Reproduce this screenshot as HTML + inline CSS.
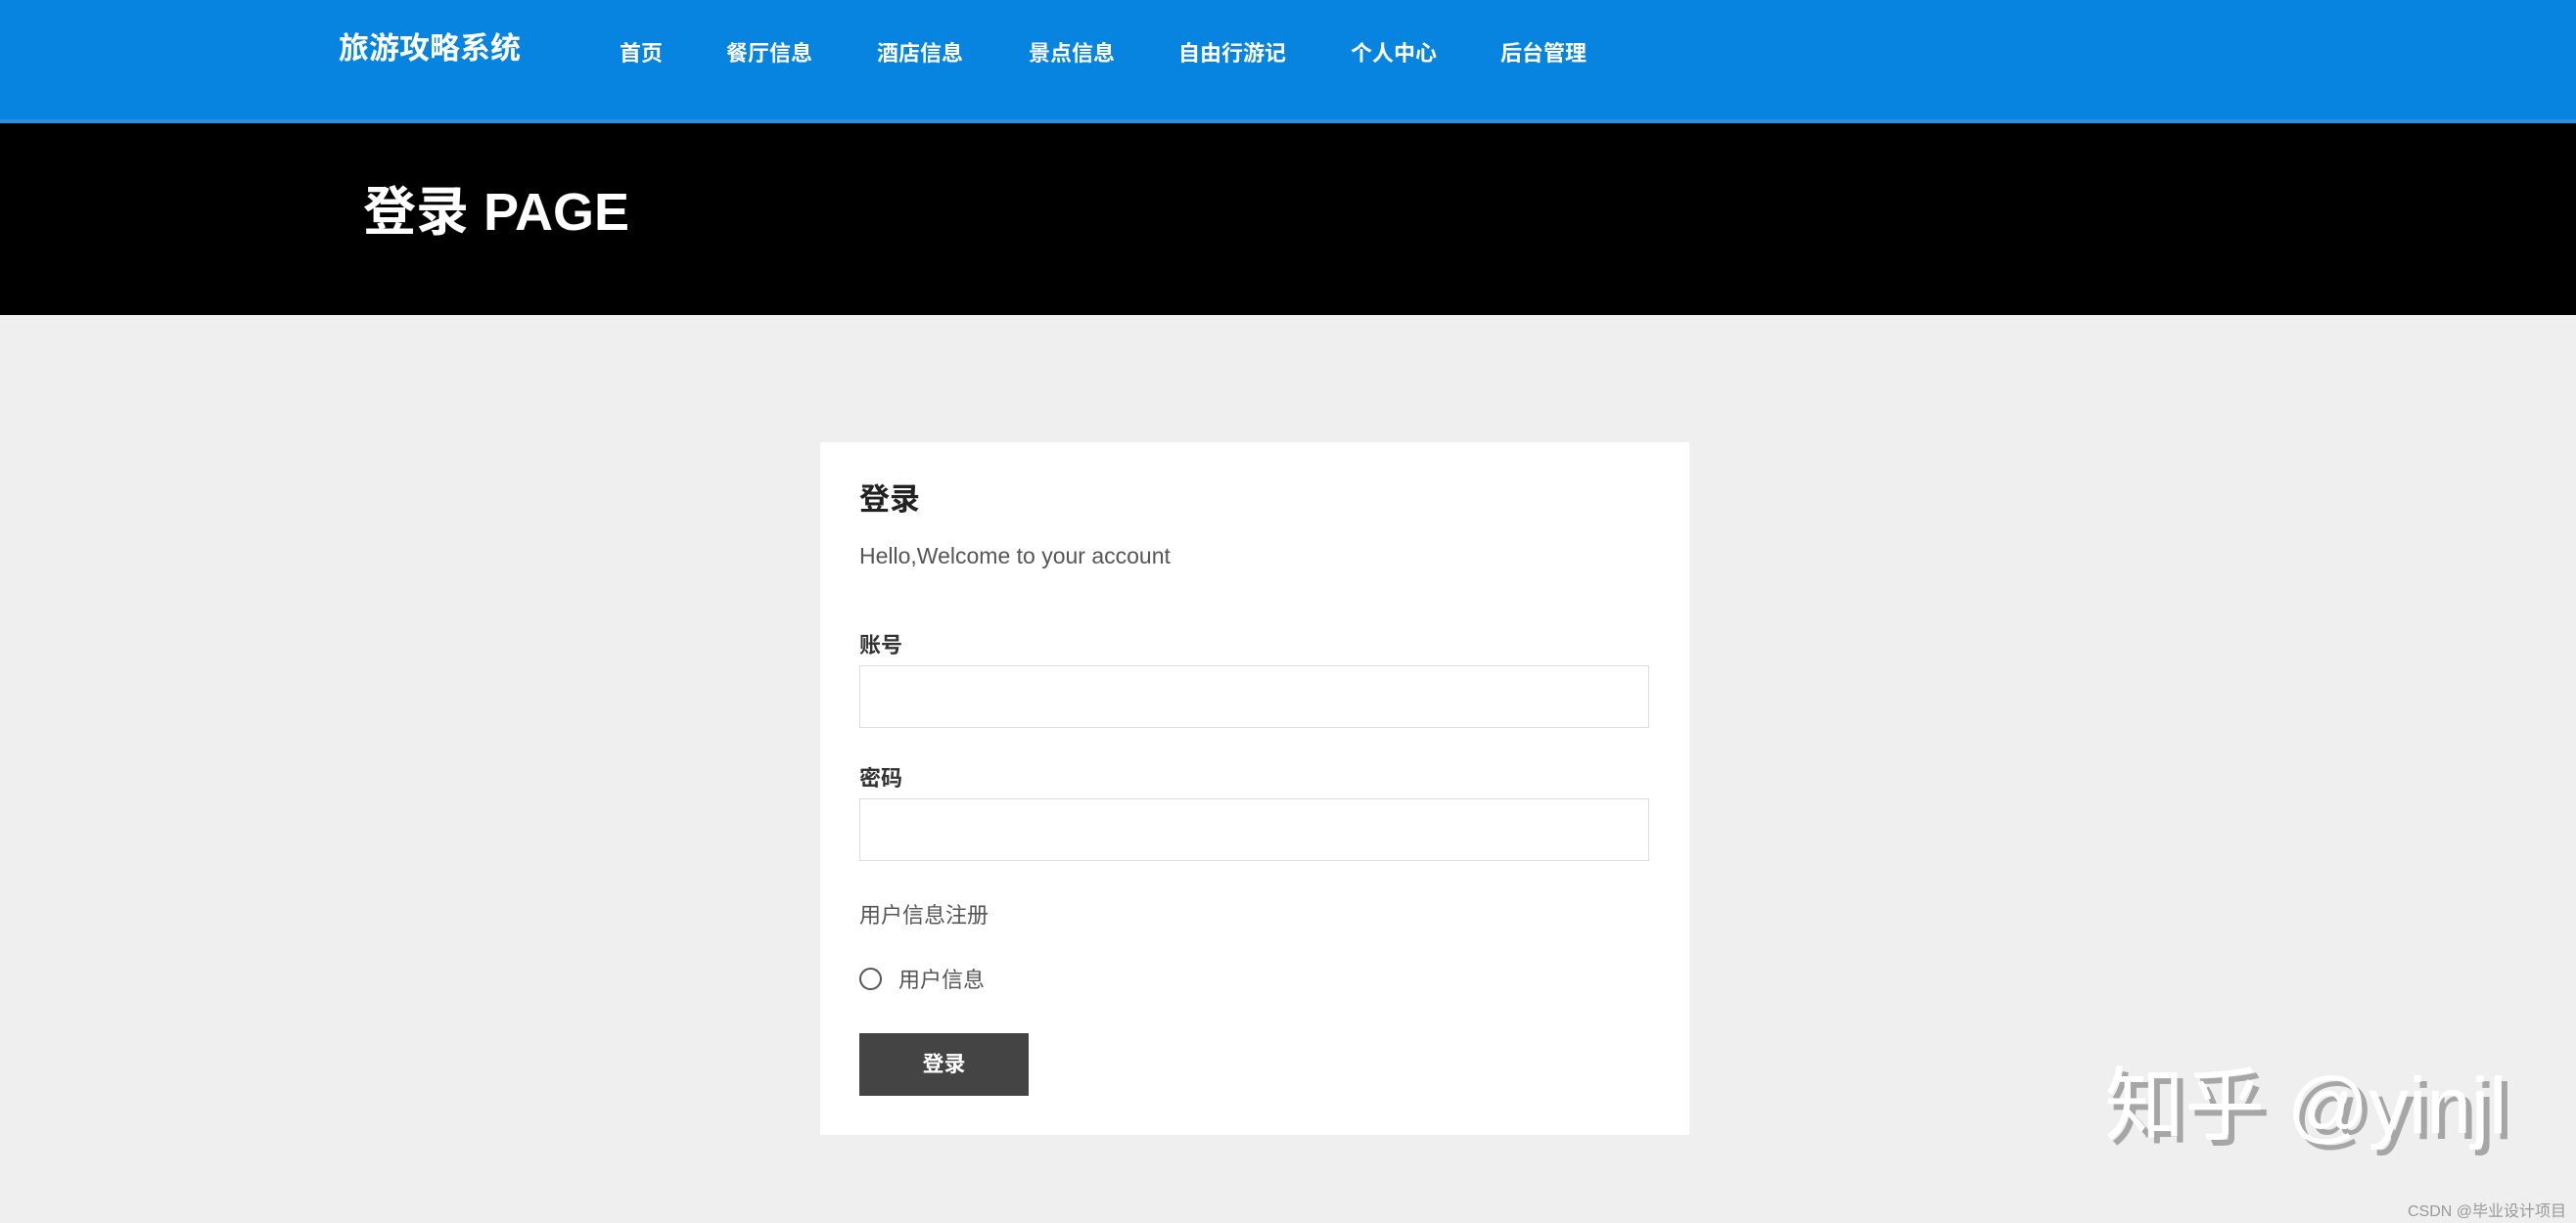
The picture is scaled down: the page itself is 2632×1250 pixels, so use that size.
<!DOCTYPE html>
<html><head><meta charset="utf-8"><style>
*{margin:0;padding:0;box-sizing:border-box}
body{width:2632px;height:1250px;background:#efefef;position:relative;overflow:hidden;font-family:"Liberation Sans","Noto Sans CJK SC",sans-serif;color:#333}
.hdr{position:absolute;left:0;top:0;width:2632px;height:126px;background:#0784e0;border-bottom:4px solid #2d8fe0}
.abs{position:absolute;white-space:nowrap}
.logo{left:346px;top:24px;font-size:31px;font-weight:bold;color:#fff}
.nav{top:37px;font-size:22px;font-weight:bold;color:#fff}
.ban{position:absolute;left:0;top:126px;width:2632px;height:196px;background:#000}
.pt{left:371px;top:185px;font-size:54px;font-weight:bold;color:#fff;line-height:1.2}
.card{position:absolute;left:838px;top:452px;width:888px;height:708px;background:#fff}
.inp{position:absolute;left:878px;width:807px;height:64px;border:1px solid #ddd;background:#fff}
.btn{position:absolute;left:878px;top:1056px;width:173px;height:64px;background:#444;color:#fff;font-weight:bold;font-size:22px;text-align:center;line-height:64px}
.wm{left:2150px;top:1082px;font-size:82px;color:#fff;text-shadow:6px 6px 0 #a6a6a6;line-height:1.2}
</style></head><body>
<div class="hdr"></div>
<div class="abs logo">旅游攻略系统</div>
<div class="abs nav" style="left:633px">首页</div>
<div class="abs nav" style="left:742px">餐厅信息</div>
<div class="abs nav" style="left:896px">酒店信息</div>
<div class="abs nav" style="left:1051px">景点信息</div>
<div class="abs nav" style="left:1204px">自由行游记</div>
<div class="abs nav" style="left:1380px">个人中心</div>
<div class="abs nav" style="left:1533px">后台管理</div>
<div class="ban"></div>
<div class="abs pt">登录 PAGE</div>
<div class="card"></div>
<div class="abs" style="left:878px;top:485px;font-size:31px;font-weight:bold;color:#222">登录</div>
<div class="abs" style="left:878px;top:555px;font-size:23px;color:#555">Hello,Welcome to your account</div>
<div class="abs" style="left:878px;top:642px;font-size:22px;font-weight:bold;color:#333">账号</div>
<div class="inp" style="top:680px"></div>
<div class="abs" style="left:878px;top:778px;font-size:22px;font-weight:bold;color:#333">密码</div>
<div class="inp" style="top:816px"></div>
<div class="abs" style="left:878px;top:918px;font-size:22px;color:#555">用户信息注册</div>
<div class="abs" style="left:878px;top:989px;width:23px;height:23px;border:2px solid #555;border-radius:50%"></div>
<div class="abs" style="left:918px;top:984px;font-size:22px;color:#555">用户信息</div>
<div class="btn">登录</div>
<div class="abs wm">知乎 @yinjl</div>
<div class="abs" style="left:2460px;top:1224px;font-size:16px;color:#999">CSDN @毕业设计项目</div>
</body></html>
